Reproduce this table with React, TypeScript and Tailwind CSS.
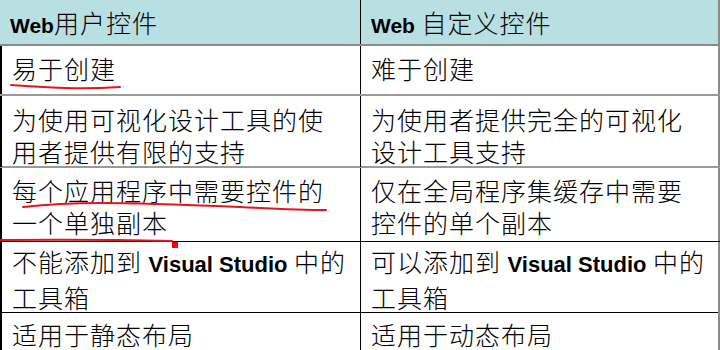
const rows = [
  {
    left: <>易于创建</>,
    right: <>难于创建</>,
    h: "h-[50px]",
    pt: "pt-[6px]",
    border: "border-b-2 border-[#9a9a9a]",
  },
  {
    left: (
      <>
        为使用可视化设计工具的使
        <br />
        用者提供有限的支持
      </>
    ),
    right: (
      <>
        为使用者提供完全的可视化
        <br />
        设计工具支持
      </>
    ),
    h: "h-[72px]",
    pt: "pt-[7px]",
    border: "border-b-2 border-[#9a9a9a]",
  },
  {
    left: (
      <>
        每个应用程序中需要控件的
        <br />
        一个单独副本
      </>
    ),
    right: (
      <>
        仅在全局程序集缓存中需要
        <br />
        控件的单个副本
      </>
    ),
    h: "h-[74px]",
    pt: "pt-[6px]",
    border: "border-b border-black",
  },
  {
    left: (
      <>
        不能添加到 <Latin>Visual Studio</Latin> 中的
        <br />
        工具箱
      </>
    ),
    right: (
      <>
        可以添加到 <Latin>Visual Studio</Latin> 中的
        <br />
        工具箱
      </>
    ),
    h: "h-[71px]",
    pt: "pt-[3px]",
    border: "border-b border-black",
  },
  {
    left: <>适用于静态布局</>,
    right: <>适用于动态布局</>,
    h: "h-[60px]",
    pt: "pt-[5px]",
    border: "",
  },
];

function Latin({ children, size = "text-[22px]" }: { children: React.ReactNode; size?: string }) {
  return (
    <span className={`font-['Liberation_Sans',Arial,sans-serif] font-bold tracking-normal ${size}`}>
      {children}
    </span>
  );
}

export default function App() {
  return (
    <div className="relative w-[720px] h-[350px] overflow-hidden bg-white text-black font-['Noto_Sans_CJK_SC','Noto_Sans_CJK_JP',sans-serif] font-light text-[25px] tracking-[1px] leading-[32px]">
      {/* header */}
      <div className="grid grid-cols-[361px_1fr] h-[46px] bg-[#b8dfe2] border-b-2 border-[#8a8a8a]">
        <div className="pl-[10px] pt-[6px] border-r border-black">
          <Latin size="text-[21px]">Web</Latin>用户控件
        </div>
        <div className="pl-[10px] pt-[6px] border-r-2 border-[#8c8c8c]">
          <Latin size="text-[21px]">Web</Latin> 自定义控件
        </div>
      </div>

      {rows.map((r, i) => (
        <div key={i} className={`grid grid-cols-[361px_1fr] ${r.h} ${r.border}`}>
          <div className={`pl-[10px] ${r.pt} border-l-2 border-r border-black`}>{r.left}</div>
          <div className={`pl-[10px] ${r.pt} border-r-2 border-[#8c8c8c]`}>{r.right}</div>
        </div>
      ))}

      {/* red hand-drawn annotations */}
      <svg className="absolute inset-0 pointer-events-none" width="720" height="350">
        <g fill="none" stroke="#e8141c" strokeWidth="2" strokeLinecap="round">
          <path d="M11 85 Q40 87 65 88 T120 87" />
          <path d="M23 207 Q60 203 100 203 T240 207 Q300 210 326 210" />
          <path d="M1 240 Q90 239 172 241" />
        </g>
        <rect x="172" y="242" width="6" height="6" fill="#f00" />
      </svg>
    </div>
  );
}
